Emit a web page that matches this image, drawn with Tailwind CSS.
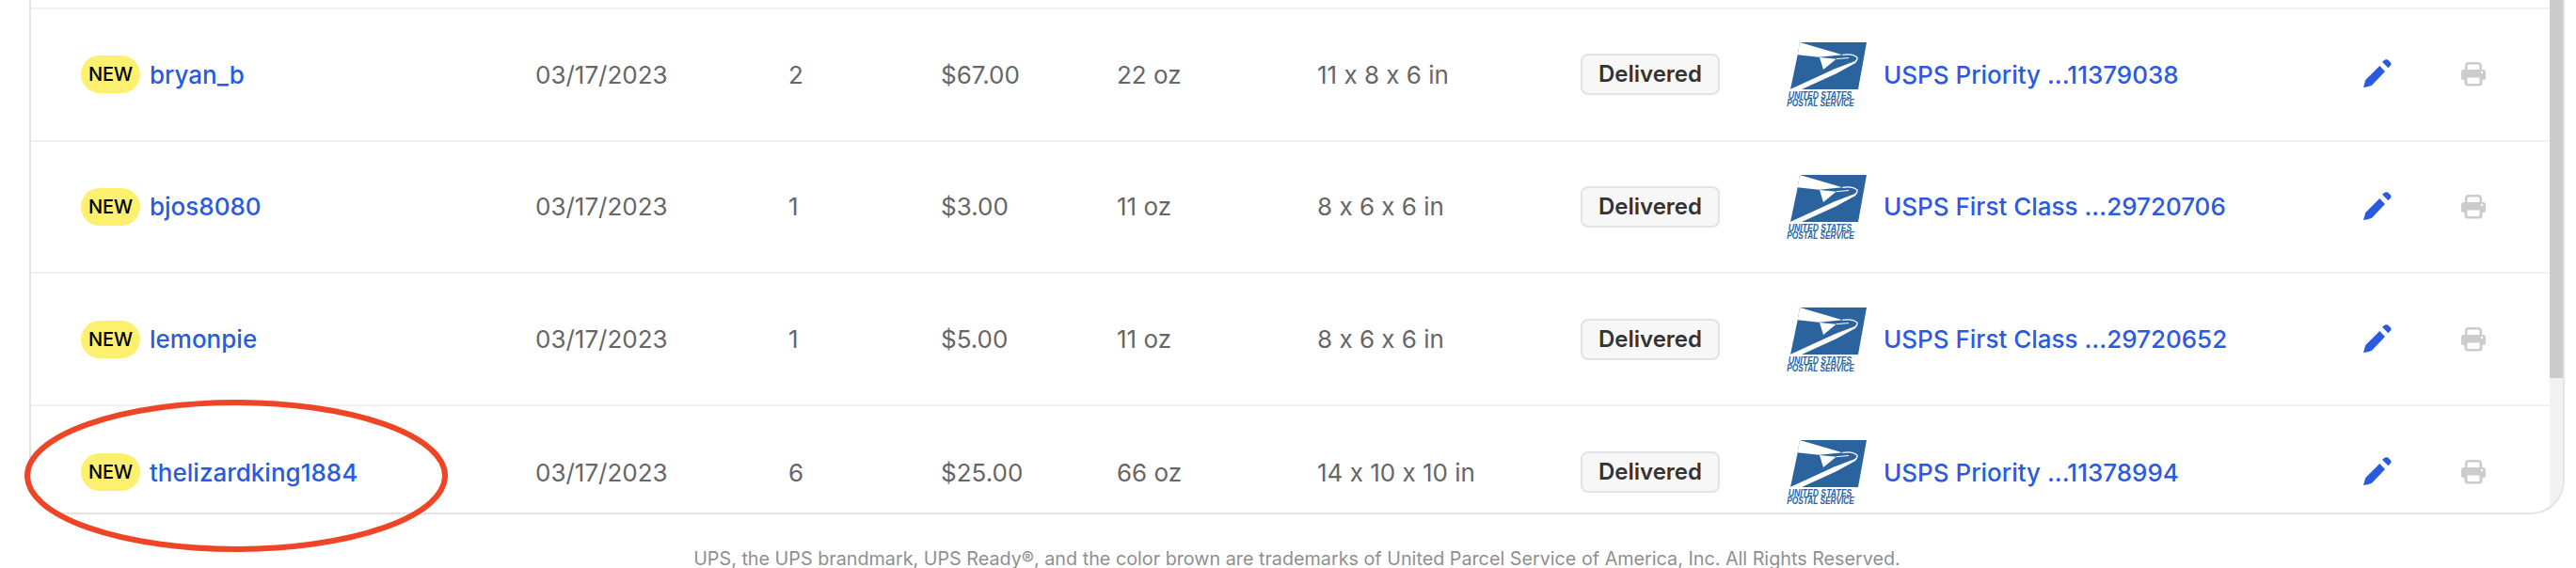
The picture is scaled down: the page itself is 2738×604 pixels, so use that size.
<!DOCTYPE html>
<html lang="en">

<head>
    <meta charset="UTF-8">
    <title>Shipments</title>
    <script src="https://cdn.jsdelivr.net/npm/@tailwindcss/browser@4"></script>
</head>

<body class="relative w-[2738px] h-[604px] overflow-hidden bg-white font-['Inter',sans-serif] [font-feature-settings:'calt'_0] text-[26px] text-[#666]">

    <!-- shared icons -->
    <svg class="hidden">
        <symbol id="usps" viewBox="0 0 86 72">
            <polygon points="14,2 85,2 76,52 4,52 11.7,15.3" fill="#2b639f" />
            <polygon points="14,2 59.3,15.3 34.3,17.7 11.7,15.3" fill="#fff" />
            <polygon points="35,18 52.7,19.7 39,31" fill="#fff" />
            <path d="M3.7 52 L51 30.3 L72.7 22 L73.7 23.7 L52.7 35.3 L16 52 Z" fill="#fff" />
            <path d="M59.3 15.3 Q70 13.5 75 18 Q75.5 21 72.5 23" fill="none" stroke="#fff" stroke-width="1.2" />
            <path d="M52.7 19.7 L66 18.5" fill="none" stroke="#fff" stroke-width="1" />
            <text x="1.7" y="61.6" textLength="67.6" lengthAdjust="spacingAndGlyphs" font-family="Liberation Sans" font-size="10" font-style="italic" font-weight="700" fill="#2b639f">UNITED STATES</text>
            <text x="0.3" y="69.6" textLength="71.4" lengthAdjust="spacingAndGlyphs" font-family="Liberation Sans" font-size="10" font-style="italic" font-weight="700" fill="#2b639f">POSTAL SERVICE</text>
        </symbol>
        <symbol id="pencil" viewBox="0 0 32 32">
            <path d="M1 30 L3.3 22 L18.3 7 L24 13 L10 27.7 Q6 29.5 1 30 Z" fill="#2a5bdf" />
            <path d="M21 2.8 L24 0.4 Q25.5 -0.2 27 0.6 L30 3.4 Q31 5 30 6.4 L27.4 9.2 Z" fill="#2a5bdf" />
        </symbol>
        <symbol id="printer" viewBox="0 0 26 26">
            <path d="M4 9 V4 Q4 0 8 0 H18 Q22 0 22 4 V9 H19.5 V4 Q19.5 2.5 18 2.5 H8 Q6.5 2.5 6.5 4 V9 Z" fill="#ccc" />
            <path d="M3 8 H23 Q26 8 26 11 V17 Q26 19 24 19 H22 V15 H4 V19 H2 Q0 19 0 17 V11 Q0 8 3 8 Z" fill="#ccc" />
            <circle cx="22" cy="11" r="1.2" fill="#fff" />
            <path d="M3.5 14 H22.5 V22 Q22.5 25.5 19 25.5 H7 Q3.5 25.5 3.5 22 Z M6.5 16.5 V22 Q6.5 23 7.5 23 H18.5 Q19.5 23 19.5 22 V16.5 Z" fill-rule="evenodd" fill="#ccc" />
        </symbol>
    </svg>

    <!-- Table card -->
    <div class="ml-[31px] w-[2695px] h-[547px] flex overflow-hidden border-x-2 border-b-2 border-[#e3e3e3] rounded-b-[36px]">
        <div class="flex-1 min-w-0">
            <div class="h-[10px] border-b-2 border-[#f1f1f1]"></div>

            <div class="h-[140.67px] pl-[53px] grid grid-cols-[483px_269px_162px_187px_213px_280px_219px_103px_509px_105px_26px] items-center border-b-2 border-[#f1f1f1]">
                <div class="flex items-center gap-[10px]">
                    <span class="w-[63px] h-[40px] flex items-center justify-center rounded-full bg-[#fdf06e] text-[20px] font-medium text-black">NEW</span>
                    <a class="font-medium text-[#2a5bdf]">bryan_b</a>
                </div>
                <div>03/17/2023</div>
                <div>2</div>
                <div>$67.00</div>
                <div>22 oz</div>
                <div>11 x 8 x 6 in</div>
                <div><span class="w-[148px] h-[44px] flex items-center justify-center rounded-[8px] border-2 border-[#e3e3e3] bg-[#f7f7f7] text-[24px] font-semibold text-[#333]">Delivered</span></div>
                <svg class="w-[86px] h-[72px]"><use href="#usps" /></svg>
                <a class="font-medium text-[#2a5bdf]">USPS Priority ...11379038</a>
                <svg class="w-[32px] h-[32px]"><use href="#pencil" /></svg>
                <svg class="w-[26px] h-[26px]"><use href="#printer" /></svg>
            </div>

            <div class="h-[140.67px] pl-[53px] grid grid-cols-[483px_269px_162px_187px_213px_280px_219px_103px_509px_105px_26px] items-center border-b-2 border-[#f1f1f1]">
                <div class="flex items-center gap-[10px]">
                    <span class="w-[63px] h-[40px] flex items-center justify-center rounded-full bg-[#fdf06e] text-[20px] font-medium text-black">NEW</span>
                    <a class="font-medium text-[#2a5bdf]">bjos8080</a>
                </div>
                <div>03/17/2023</div>
                <div>1</div>
                <div>$3.00</div>
                <div>11 oz</div>
                <div>8 x 6 x 6 in</div>
                <div><span class="w-[148px] h-[44px] flex items-center justify-center rounded-[8px] border-2 border-[#e3e3e3] bg-[#f7f7f7] text-[24px] font-semibold text-[#333]">Delivered</span></div>
                <svg class="w-[86px] h-[72px]"><use href="#usps" /></svg>
                <a class="font-medium text-[#2a5bdf]">USPS First Class ...29720706</a>
                <svg class="w-[32px] h-[32px]"><use href="#pencil" /></svg>
                <svg class="w-[26px] h-[26px]"><use href="#printer" /></svg>
            </div>

            <div class="h-[140.67px] pl-[53px] grid grid-cols-[483px_269px_162px_187px_213px_280px_219px_103px_509px_105px_26px] items-center border-b-2 border-[#f1f1f1]">
                <div class="flex items-center gap-[10px]">
                    <span class="w-[63px] h-[40px] flex items-center justify-center rounded-full bg-[#fdf06e] text-[20px] font-medium text-black">NEW</span>
                    <a class="font-medium text-[#2a5bdf]">lemonpie</a>
                </div>
                <div>03/17/2023</div>
                <div>1</div>
                <div>$5.00</div>
                <div>11 oz</div>
                <div>8 x 6 x 6 in</div>
                <div><span class="w-[148px] h-[44px] flex items-center justify-center rounded-[8px] border-2 border-[#e3e3e3] bg-[#f7f7f7] text-[24px] font-semibold text-[#333]">Delivered</span></div>
                <svg class="w-[86px] h-[72px]"><use href="#usps" /></svg>
                <a class="font-medium text-[#2a5bdf]">USPS First Class ...29720652</a>
                <svg class="w-[32px] h-[32px]"><use href="#pencil" /></svg>
                <svg class="w-[26px] h-[26px]"><use href="#printer" /></svg>
            </div>

            <div class="h-[140.67px] pl-[53px] grid grid-cols-[483px_269px_162px_187px_213px_280px_219px_103px_509px_105px_26px] items-center">
                <div class="flex items-center gap-[10px]">
                    <span class="w-[63px] h-[40px] flex items-center justify-center rounded-full bg-[#fdf06e] text-[20px] font-medium text-black">NEW</span>
                    <a class="font-medium text-[#2a5bdf]">thelizardking1884</a>
                </div>
                <div>03/17/2023</div>
                <div>6</div>
                <div>$25.00</div>
                <div>66 oz</div>
                <div>14 x 10 x 10 in</div>
                <div><span class="w-[148px] h-[44px] flex items-center justify-center rounded-[8px] border-2 border-[#e3e3e3] bg-[#f7f7f7] text-[24px] font-semibold text-[#333]">Delivered</span></div>
                <svg class="w-[86px] h-[72px]"><use href="#usps" /></svg>
                <a class="font-medium text-[#2a5bdf]">USPS Priority ...11378994</a>
                <svg class="w-[32px] h-[32px]"><use href="#pencil" /></svg>
                <svg class="w-[26px] h-[26px]"><use href="#printer" /></svg>
            </div>
        </div>

        <!-- Scrollbar -->
        <div class="w-[14px] shrink-0 bg-[#f1f1f1]">
            <div class="h-[402px] bg-[#ccc]"></div>
        </div>
    </div>

    <p class="ml-[31px] w-[2695px] mt-[32px] text-center text-[19.75px] leading-[30px] text-[#8f8f8f]">UPS, the UPS brandmark, UPS Ready®, and the color brown are trademarks of United Parcel Service of America, Inc. All Rights Reserved.</p>

    <!-- Red annotation circling the username -->
    <svg class="absolute left-0 top-0 w-[520px] h-[604px] pointer-events-none">
        <ellipse cx="251" cy="506" rx="222" ry="78" fill="none" stroke="#ee4527" stroke-width="6" />
    </svg>

</body>

</html>
